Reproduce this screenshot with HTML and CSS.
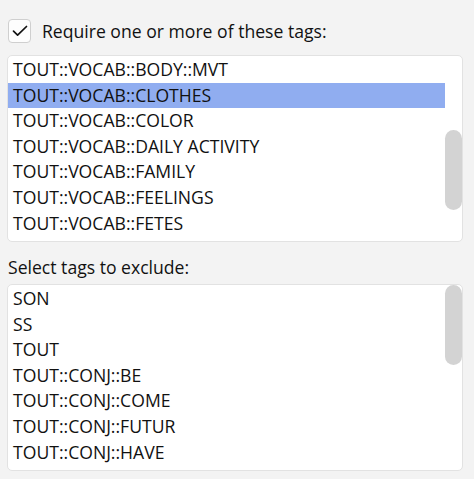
FILE: index.html
```html
<!DOCTYPE html>
<html>
<head>
<meta charset="utf-8">
<link rel="stylesheet" href="styles.css">
</head>
<body>
<div class="page">
  <label class="check-row">
    <span class="checkbox">
      <svg width="16" height="12" viewBox="0 0 16 12"><path d="M1.5 6.2 L5.6 10.2 L14.5 1.5" fill="none" stroke="#111" stroke-width="1.7" stroke-linecap="round" stroke-linejoin="round"/></svg>
    </span>
    <span class="check-label">Require one or more of these tags:</span>
  </label>
  <div class="listbox">
    <div class="item">TOUT::VOCAB::BODY::MVT</div>
    <div class="item selected">TOUT::VOCAB::CLOTHES</div>
    <div class="item">TOUT::VOCAB::COLOR</div>
    <div class="item">TOUT::VOCAB::DAILY ACTIVITY</div>
    <div class="item">TOUT::VOCAB::FAMILY</div>
    <div class="item">TOUT::VOCAB::FEELINGS</div>
    <div class="item">TOUT::VOCAB::FETES</div>
    <div class="thumb thumb-mid"></div>
  </div>
  <div class="section-label">Select tags to exclude:</div>
  <div class="listbox">
    <div class="item">SON</div>
    <div class="item">SS</div>
    <div class="item">TOUT</div>
    <div class="item">TOUT::CONJ::BE</div>
    <div class="item">TOUT::CONJ::COME</div>
    <div class="item">TOUT::CONJ::FUTUR</div>
    <div class="item">TOUT::CONJ::HAVE</div>
    <div class="thumb thumb-top"></div>
  </div>
</div>
</body>
</html>
```

FILE: styles.css
```css
html, body {
  margin: 0;
  padding: 0;
  background: #f3f3f3;
}
body {
  font-family: "Open Sans", "Noto Sans", sans-serif;
  font-size: 17.6px;
  color: #111111;
  width: 474px;
  height: 479px;
  overflow: hidden;
}
.page {
  padding: 19px 11px 0 7px;
  display: flex;
  flex-direction: column;
}
.check-row {
  display: flex;
  align-items: center;
  gap: 11px;
  padding-left: 1px;
  height: 24px;
}
.checkbox {
  border: 1px solid #cfcfcf;
  border-radius: 4px;
  background: #fdfdfd;
  display: flex;
  align-items: center;
  justify-content: center;
  box-sizing: border-box;
  width: 23px;
  height: 24px;
}
.check-label {
  line-height: 24px;
}
.listbox {
  margin-top: 12px;
  position: relative;
  background: #ffffff;
  border: 1px solid #e2e2e2;
  border-radius: 5px;
  height: 187px;
  box-sizing: border-box;
  padding-top: 1px;
}
.item {
  height: 25.6px;
  line-height: 25.6px;
  padding-left: 5px;
  white-space: nowrap;
  margin-right: 17px;
}
.item.selected {
  background: #90adf0;
}
.thumb {
  position: absolute;
  right: 0;
  width: 17px;
  height: 80px;
  background: #d3d3d3;
  border-radius: 9px;
}
.thumb-mid {
  top: 74px;
}
.thumb-top {
  top: 0;
}
.section-label {
  margin-top: 13px;
  line-height: 24px;
  height: 24px;
  padding-left: 1px;
}
.section-label + .listbox {
  margin-top: 5px;
}
```
